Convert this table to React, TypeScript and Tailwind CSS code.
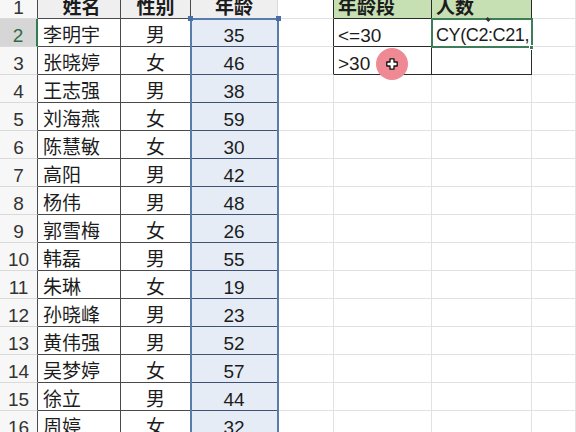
import React from "react";

const rows: [string, string, string, string][] = [
  ["1", "姓名", "性别", "年龄"],
  ["2", "李明宇", "男", "35"],
  ["3", "张晓婷", "女", "46"],
  ["4", "王志强", "男", "38"],
  ["5", "刘海燕", "女", "59"],
  ["6", "陈慧敏", "女", "30"],
  ["7", "高阳", "男", "42"],
  ["8", "杨伟", "男", "48"],
  ["9", "郭雪梅", "女", "26"],
  ["10", "韩磊", "男", "55"],
  ["11", "朱琳", "女", "19"],
  ["12", "孙晓峰", "男", "23"],
  ["13", "黄伟强", "男", "52"],
  ["14", "吴梦婷", "女", "57"],
  ["15", "徐立", "男", "44"],
  ["16", "周婷", "女", "32"],
];

const base = "box-border border-r border-b flex items-center pt-[5px] leading-none overflow-hidden whitespace-nowrap";

export default function App() {
  return (
    <div
      className="relative w-[576px] h-[432px] overflow-hidden bg-white text-[19px] text-[#1c1c1c]"
      style={{ fontFamily: '"Liberation Sans", "Noto Sans CJK SC", sans-serif' }}
    >
      <div className="-mt-[9px] grid grid-cols-[38px_83px_70px_87px_56px_98px_100px_1fr] auto-rows-[28px]">
        {rows.map((r, i) => {
          const isHead = i === 0;
          const isActiveRow = i === 1;
          const inTable2 = i <= 2;
          return (
            <React.Fragment key={r[0]}>
              <div
                className={`${base} justify-center border-b-[#dadada] ${
                  isActiveRow
                    ? "bg-[#d6d6d6] text-[#2f6b45] border-r-2 border-r-[#2e7d4f]"
                    : "bg-[#f7f7f7] text-[#333] border-r-[#4a4a4a]"
                }`}
              >
                {r[0]}
              </div>
              <div
                className={`${base} pl-[5px] border-r-[#4a4a4a] border-b-[#4a4a4a] ${
                  isHead ? "bg-[#efefef] font-bold justify-center" : ""
                }`}
              >
                {r[1]}
              </div>
              <div
                className={`${base} justify-center border-r-[#4a4a4a] border-b-[#4a4a4a] ${
                  isHead ? "bg-[#efefef] font-bold" : ""
                }`}
              >
                {r[2]}
              </div>
              <div
                className={`${base} justify-center ${
                  isHead
                    ? "bg-[#efefef] font-bold border-r-[#dadada] border-b-[#4a4a4a]"
                    : "bg-[#e5ecf6] border-r-[#dadada] border-b-[#3f5370]"
                }`}
              >
                {r[3]}
              </div>
              <div
                className={`${base} border-b-[#e2e2e2] ${
                  inTable2 ? "border-r-[#2a2a2a]" : "border-r-[#e2e2e2]"
                }`}
              />
              <div
                className={`${base} pl-[4px] ${
                  inTable2 ? "border-r-[#2a2a2a] border-b-[#2a2a2a]" : "border-r-[#e2e2e2] border-b-[#e2e2e2]"
                } ${isHead ? "bg-[#c6e0b4] font-bold" : ""}`}
              >
                {i === 0 ? "年龄段" : i === 1 ? "<=30" : i === 2 ? ">30" : ""}
              </div>
              <div
                className={`${base} pl-[4px] ${
                  inTable2 ? "border-r-[#2a2a2a] border-b-[#2a2a2a]" : "border-r-[#e2e2e2] border-b-[#e2e2e2]"
                } ${isHead ? "bg-[#c6e0b4] font-bold" : ""} ${i === 1 ? "text-[18px] tracking-[-0.4px]" : ""}`}
              >
                {i === 0 ? "人数" : i === 1 ? "CY(C2:C21," : ""}
              </div>
              <div className={`${base} border-r-[#e2e2e2] border-b-[#e2e2e2]`} />
            </React.Fragment>
          );
        })}
      </div>

      {/* referenced range outline C2:C21 */}
      <div className="absolute left-[190px] top-[18px] w-[89px] h-[500px] border-2 border-[#5a7cab] pointer-events-none" />
      <div className="absolute left-[188px] top-[16px] w-[5px] h-[5px] bg-[#4a6fa5]" />
      <div className="absolute left-[276px] top-[16px] w-[5px] h-[5px] bg-[#4a6fa5]" />

      {/* active cell F2 */}
      <div className="absolute left-[431px] top-[18px] w-[102px] h-[30px] border-2 border-[#3d7d58] pointer-events-none" />
      <div className="absolute left-[529px] top-[45px] w-[5px] h-[5px] bg-[#3d7d58] border border-white" />
      <div className="absolute left-[486px] top-[18px] w-[4px] h-[3px] bg-[#333] rotate-45" />

      {/* click cursor */}
      <div className="absolute left-[376px] top-[48px] w-[32px] h-[32px] rounded-full bg-[#ef8a95] flex items-center justify-center">
        <svg width="12" height="12" viewBox="0 0 12 12">
          <path
            d="M4 0.8h4v3.2h3.2v4H8v3.2H4V8H0.8V4H4z"
            fill="#fff"
            stroke="#111"
            strokeWidth="1.3"
            strokeLinejoin="round"
          />
        </svg>
      </div>
    </div>
  );
}
